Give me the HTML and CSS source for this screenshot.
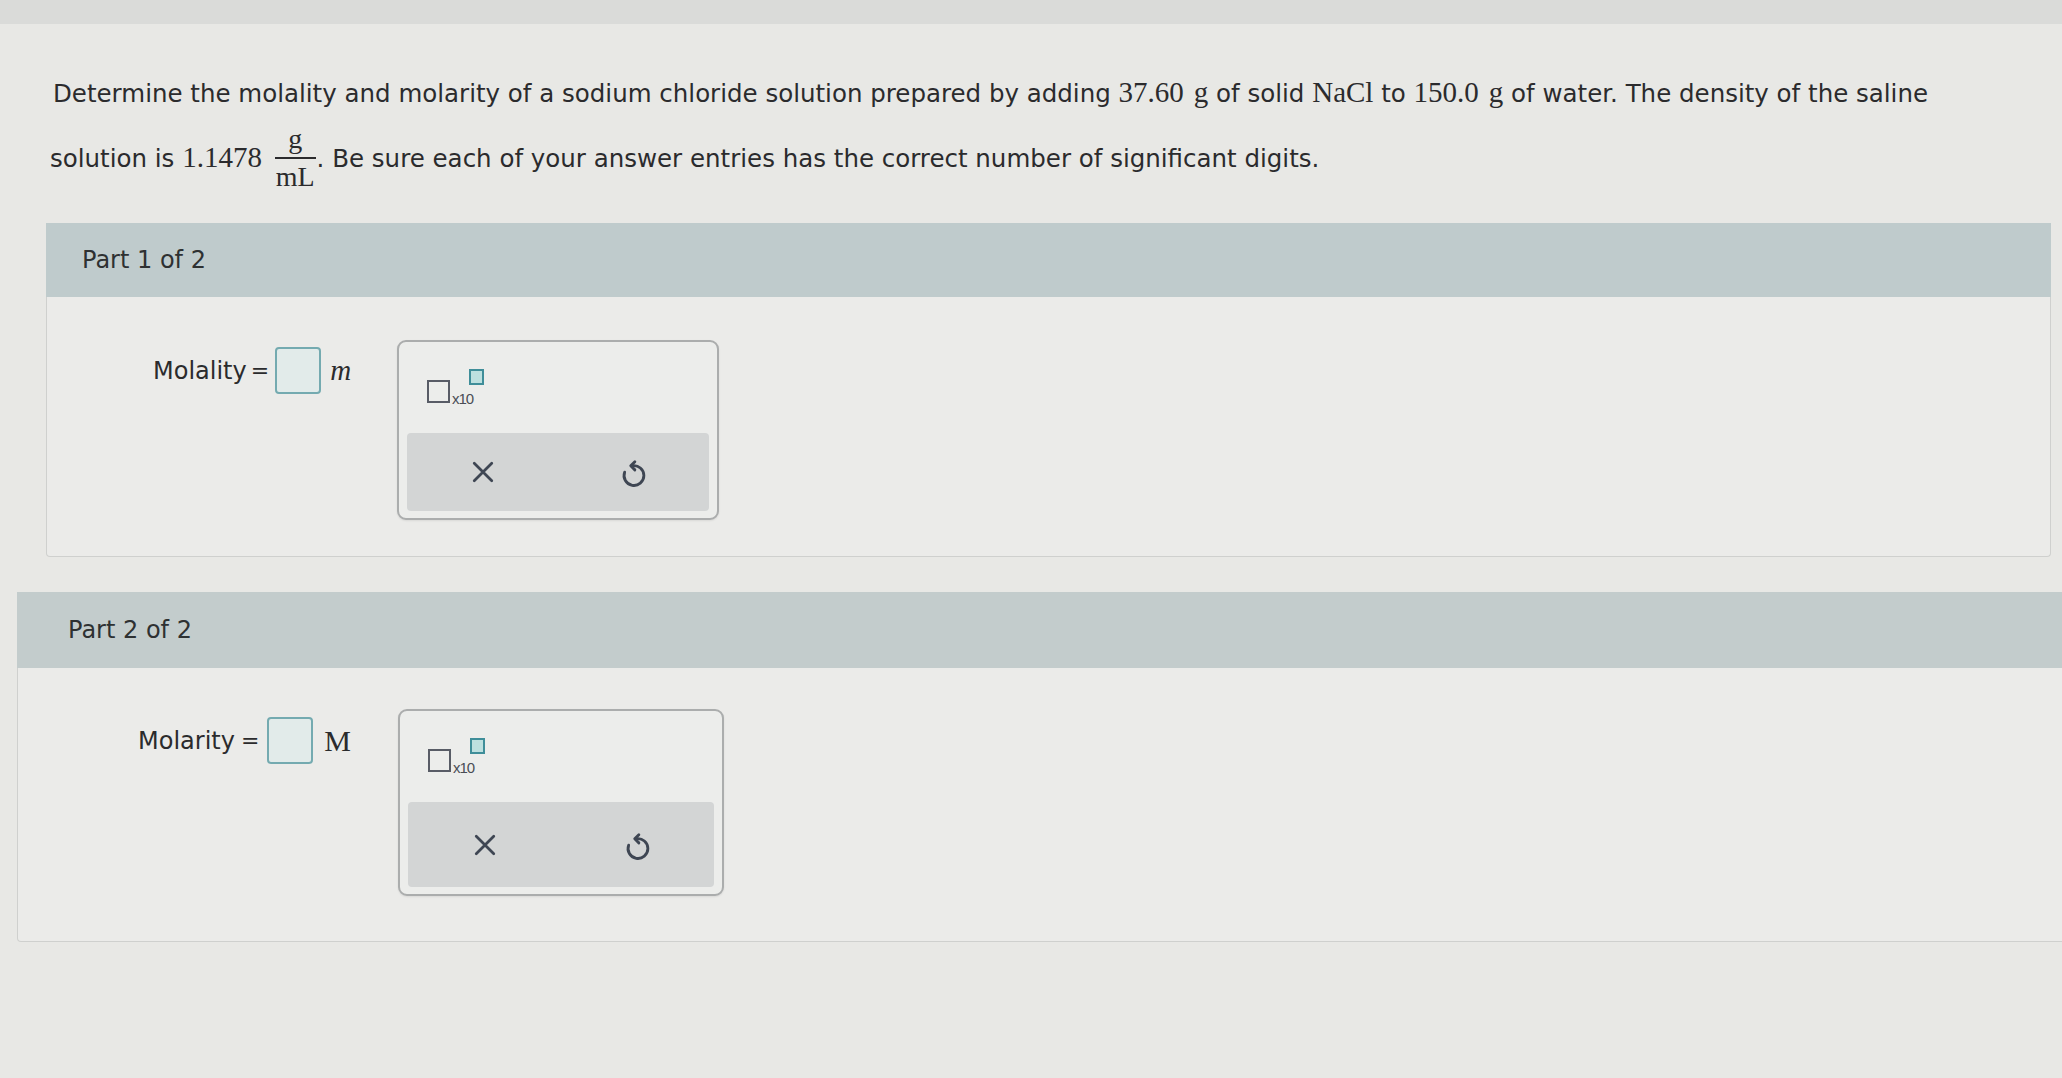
FILE: index.html
```html
<!DOCTYPE html>
<html lang="en">
<head>
<meta charset="utf-8">
<title>Molality and molarity</title>
<link rel="stylesheet" href="styles.css">
</head>
<body>
<div class="topband"></div>
<div class="question">
  <p class="q-line">Determine the molality and molarity of a sodium chloride solution prepared by adding <span class="math">37.60<span class="unit-gap"></span>g</span> of solid <span class="math">NaCl</span> to <span class="math">150.0<span class="unit-gap"></span>g</span> of water. The density of the saline</p>
  <p class="q-line q-line2">solution is <span class="math">1.1478</span> <span class="frac"><span class="num">g</span><span class="den">mL</span></span>. Be sure each of your answer entries has the correct number of significant digits.</p>
</div>

<section class="part part1">
  <div class="part-head">Part 1 of 2</div>
  <div class="part-body">
    <div class="equation">
      <span class="label">Molality</span><span class="eq">=</span><span class="answer-box"></span><span class="unit unit-italic">m</span>
    </div>
    <div class="tools">
      <div class="sci">
        <span class="sci-base"></span><span class="sci-x">x10</span><span class="sci-exp"></span>
      </div>
      <div class="btnbar">
        <div class="btn">
          <svg class="ico-x" width="30" height="30" viewBox="0 0 24 24"><path d="M5 5 L19 19 M19 5 L5 19" fill="none" stroke="#3e4653" stroke-width="2.2" stroke-linecap="round"/></svg>
        </div>
        <div class="btn">
          <svg class="ico-undo" width="34" height="34" viewBox="0 0 24 24"><path d="M5.4 12.1 A7 7 0 1 0 10.8 7.6" fill="none" stroke="#3e4653" stroke-width="2" stroke-linecap="round"/><path d="M12.6 4.7 L9.7 7.6 L12.6 10.5" fill="none" stroke="#3e4653" stroke-width="2" stroke-linecap="round" stroke-linejoin="round"/></svg>
        </div>
      </div>
    </div>
  </div>
</section>

<section class="part part2">
  <div class="part-head">Part 2 of 2</div>
  <div class="part-body">
    <div class="equation">
      <span class="label">Molarity</span><span class="eq">=</span><span class="answer-box"></span><span class="unit">M</span>
    </div>
    <div class="tools">
      <div class="sci">
        <span class="sci-base"></span><span class="sci-x">x10</span><span class="sci-exp"></span>
      </div>
      <div class="btnbar">
        <div class="btn">
          <svg class="ico-x" width="30" height="30" viewBox="0 0 24 24"><path d="M5 5 L19 19 M19 5 L5 19" fill="none" stroke="#3e4653" stroke-width="2.2" stroke-linecap="round"/></svg>
        </div>
        <div class="btn">
          <svg class="ico-undo" width="34" height="34" viewBox="0 0 24 24"><path d="M5.4 12.1 A7 7 0 1 0 10.8 7.6" fill="none" stroke="#3e4653" stroke-width="2" stroke-linecap="round"/><path d="M12.6 4.7 L9.7 7.6 L12.6 10.5" fill="none" stroke="#3e4653" stroke-width="2" stroke-linecap="round" stroke-linejoin="round"/></svg>
        </div>
      </div>
    </div>
  </div>
</section>
</body>
</html>
```

FILE: styles.css
```css
html, body {
  margin: 0;
  padding: 0;
}
body {
  background: #e8e8e5;
  color: #2b2b2d;
  font-family: "DejaVu Sans", Verdana, sans-serif;
  font-size: 24px;
  width: 2062px;
  height: 1078px;
  overflow: hidden;
}
.topband {
  height: 24px;
  background: #dadbd9;
}
.question {
  padding: 52px 0 0 53px;
}
.q-line {
  margin: 0;
  white-space: nowrap;
  line-height: 32px;
  font-size: 24.5px;
}
.q-line2 {
  margin-top: 17px;
  margin-left: -3px;
}
.math {
  font-family: "Liberation Serif", "Times New Roman", serif;
  font-size: 29px;
}
.unit-gap {
  display: inline-block;
  width: 10px;
}
.frac {
  display: inline-flex;
  flex-direction: column;
  align-items: center;
  vertical-align: middle;
  font-family: "Liberation Serif", "Times New Roman", serif;
  font-size: 28px;
  line-height: 27px;
  margin: 0 2px 0 6px;
  position: relative;
  top: -2px;
}
.num {
  border-bottom: 2px solid #2b2b2d;
  padding: 0 1px 5px;
  width: 100%;
  text-align: center;
}
.den {
  padding-top: 4px;
}

.part {
  box-sizing: border-box;
}
.part1 {
  margin: 31px 0 0 46px;
  width: 2005px;
}
.part2 {
  margin: 35px 0 0 17px;
  width: 2060px;
}
.part-head {
  background: #bfcbcc;
  height: 74px;
  display: flex;
  align-items: center;
  font-size: 24px;
  color: #2e3132;
}
.part1 .part-head {
  padding-left: 36px;
}
.part2 .part-head {
  padding-left: 51px;
  background: #c3cccc;
  height: 76px;
}
.part-body {
  border: 1.5px solid #cfd0ce;
  border-top: none;
  border-radius: 0 0 4px 4px;
  background: #ebebe9;
  display: flex;
  align-items: flex-start;
  box-sizing: border-box;
}
.part1 .part-body {
  height: 260px;
  padding: 43px 0 0 106px;
}
.part2 .part-body {
  height: 274px;
  padding: 41px 0 0 120px;
}
.equation {
  display: flex;
  align-items: center;
  margin-top: 7px;
  width: 244px;
}
.part2 .equation {
  margin-top: 8px;
  width: 260px;
}
.label {
  font-size: 24px;
}
.eq {
  margin: 0 6px 0 4px;
  font-size: 22px;
}
.part2 .eq {
  margin: 0 8px 0 6px;
}
.answer-box {
  width: 42px;
  height: 43px;
  border: 2px solid #74aab0;
  border-radius: 4px;
  background: #e2ebea;
}
.unit {
  font-family: "Liberation Serif", "Times New Roman", serif;
  font-size: 30px;
  margin-left: 11px;
}
.unit-italic {
  font-style: italic;
  font-size: 29px;
  margin-left: 9px;
}

.tools {
  width: 322px;
  height: 180px;
  box-sizing: border-box;
  border: 2px solid #abadad;
  border-radius: 9px;
  background: #ecedeb;
  box-shadow: 0 1px 2px rgba(0,0,0,0.08);
  padding: 0 8px 7px 8px;
  display: flex;
  flex-direction: column;
}
.part2 .tools {
  width: 326px;
  height: 187px;
}
.sci {
  display: flex;
  align-items: flex-start;
  height: 91px;
  padding: 27px 0 0 20px;
  box-sizing: border-box;
}
.sci-base {
  width: 19px;
  height: 19px;
  border: 2.5px solid #585c66;
  margin-top: 11px;
}
.sci-x {
  font-family: "Liberation Sans", Arial, sans-serif;
  font-size: 15px;
  color: #4a4d55;
  margin-top: 21px;
  margin-left: 2px;
  letter-spacing: -1px;
}
.sci-exp {
  width: 11px;
  height: 12px;
  border: 2.5px solid #3f8e99;
  background: #bde0df;
  margin-left: -4px;
}
.btnbar {
  flex: 1;
  background: #d3d5d5;
  border-radius: 4px;
  display: flex;
}
.btn {
  flex: 1;
  display: flex;
  align-items: center;
  justify-content: center;
}
.btn svg {
  display: block;
}
```
